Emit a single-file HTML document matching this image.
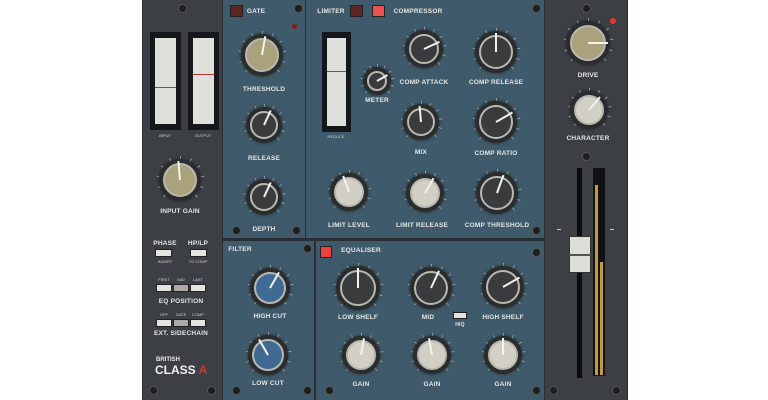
<!DOCTYPE html>
<html><head><meta charset="utf-8"><style>
body{margin:0;width:768px;height:400px;background:#fff;position:relative;overflow:hidden;font-family:"Liberation Sans",sans-serif}
div{position:absolute;box-sizing:border-box}
.l{color:#e4e6e4;font-size:6.5px;font-weight:bold;white-space:nowrap;transform:translateX(-50%);letter-spacing:.2px}
.s{color:#cfd3d3;font-size:4px;white-space:nowrap;transform:translateX(-50%)}
.k{border-radius:50%}
.scr{width:9px;height:9px;border-radius:50%;background:#1c1e20;border:1px solid #555}
.btn{background:#e4e4e0;border:1px solid #222;height:8px}
.t{width:1px;background:#9aaab0;transform-origin:50% 0}
</style></head><body>
<div style="left:142px;top:0;width:486px;height:400px;background:#2a2d31"></div>
<div style="left:143px;top:0;width:79px;height:400px;background:#3c4045"></div>
<div style="left:545px;top:0;width:82px;height:400px;background:#3c4045"></div>
<div style="left:223px;top:0;width:82px;height:238px;background:#3f5b6b"></div>
<div style="left:306px;top:0;width:238px;height:238px;background:#3f5b6b"></div>
<div style="left:223px;top:241px;width:91px;height:159px;background:#3f5b6b"></div>
<div style="left:316px;top:241px;width:228px;height:159px;background:#3f5b6b"></div>
<div style="left:150px;top:32px;width:31px;height:98px;background:#15171a"></div>
<div style="left:155px;top:38px;width:21px;height:86px;background:#dfe0dc"></div>
<div style="left:155px;top:87px;width:21px;height:1px;background:#b33"></div>
<div style="left:188px;top:32px;width:31px;height:98px;background:#15171a"></div>
<div style="left:193px;top:38px;width:21px;height:86px;background:#dfe0dc"></div>
<div style="left:193px;top:74px;width:21px;height:1px;background:#b33"></div>
<div style="left:322px;top:32px;width:29px;height:100px;background:#15171a"></div>
<div style="left:327px;top:38px;width:19px;height:88px;background:#dfe0dc"></div>
<div style="left:327px;top:71px;width:19px;height:1px;background:#b33"></div>
<div style="left:230px;top:5px;width:13px;height:12px;background:#5a2626;border:1px solid #222"></div>
<div style="left:350px;top:5px;width:13px;height:12px;background:#5a2626;border:1px solid #222"></div>
<div style="left:372px;top:5px;width:13px;height:12px;background:#ef5050;border:1px solid #222"></div>
<div style="left:320px;top:246px;width:12px;height:12px;background:#ef4040;border:1px solid #222"></div>
<div style="left:292px;top:24px;width:5px;height:5px;border-radius:50%;background:#8a1b1b"></div>
<div style="left:610px;top:18px;width:6px;height:6px;border-radius:50%;background:#e33"></div>
<div style="left:577px;top:168px;width:5px;height:210px;background:#0d0d0e"></div>
<div style="left:593px;top:168px;width:12px;height:208px;background:#111"></div>
<div style="left:595px;top:185px;width:3px;height:190px;background:#c49a3a"></div>
<div style="left:600px;top:262px;width:3px;height:113px;background:#c49a3a"></div>
<div style="left:569px;top:236px;width:22px;height:37px;background:#ddddd8;border:1px solid #333"></div>
<div style="left:569px;top:254px;width:22px;height:2px;background:#555"></div>
<div style="left:557px;top:229px;width:4px;height:1px;background:#ccc"></div><div style="left:610px;top:229px;width:4px;height:1px;background:#ccc"></div>
<div class="btn" style="left:155px;top:249px;width:17px"></div>
<div class="btn" style="left:190px;top:249px;width:17px"></div>
<div class="btn" style="left:156px;top:284px;width:16px"></div>
<div class="btn" style="left:173px;top:284px;width:16px;background:#aaa"></div>
<div class="btn" style="left:190px;top:284px;width:16px"></div>
<div class="btn" style="left:156px;top:319px;width:16px"></div>
<div class="btn" style="left:173px;top:319px;width:16px;background:#aaa"></div>
<div class="btn" style="left:190px;top:319px;width:16px"></div>
<div class="btn" style="left:453px;top:312px;width:14px;height:7px"></div>
<div class="scr" style="left:178px;top:4px"></div><div class="scr" style="left:149px;top:386px"></div><div class="scr" style="left:207px;top:386px"></div>
<div class="scr" style="left:294px;top:4px"></div><div class="scr" style="left:532px;top:4px"></div><div class="scr" style="left:232px;top:226px"></div><div class="scr" style="left:292px;top:226px"></div>
<div class="scr" style="left:532px;top:226px"></div><div class="scr" style="left:303px;top:244px"></div><div class="scr" style="left:232px;top:386px"></div><div class="scr" style="left:303px;top:386px"></div>
<div class="scr" style="left:325px;top:386px"></div><div class="scr" style="left:532px;top:386px"></div><div class="scr" style="left:532px;top:248px"></div>
<div class="scr" style="left:582px;top:152px"></div><div class="scr" style="left:549px;top:386px"></div><div class="scr" style="left:612px;top:386px"></div><div class="scr" style="left:582px;top:4px"></div>
<div id="knobs"></div>
<div class="l" style="left:256px;top:8px">GATE</div>
<div class="l" style="left:331px;top:8px">LIMITER</div>
<div class="l" style="left:418px;top:8px">COMPRESSOR</div>
<div class="l" style="left:240px;top:246px">FILTER</div>
<div class="l" style="left:361px;top:247px">EQUALISER</div>
<div class="l" style="left:264px;top:86px">THRESHOLD</div>
<div class="l" style="left:264px;top:155px">RELEASE</div>
<div class="l" style="left:264px;top:226px">DEPTH</div>
<div class="l" style="left:180px;top:208px">INPUT GAIN</div>
<div class="l" style="left:377px;top:97px">METER</div>
<div class="l" style="left:424px;top:79px">COMP ATTACK</div>
<div class="l" style="left:496px;top:79px">COMP RELEASE</div>
<div class="l" style="left:421px;top:149px">MIX</div>
<div class="l" style="left:496px;top:150px">COMP RATIO</div>
<div class="l" style="left:349px;top:222px">LIMIT LEVEL</div>
<div class="l" style="left:422px;top:222px">LIMIT RELEASE</div>
<div class="l" style="left:497px;top:222px">COMP THRESHOLD</div>
<div class="l" style="left:270px;top:313px">HIGH CUT</div>
<div class="l" style="left:268px;top:380px">LOW CUT</div>
<div class="l" style="left:358px;top:314px">LOW SHELF</div>
<div class="l" style="left:428px;top:314px">MID</div>
<div class="l" style="left:503px;top:314px">HIGH SHELF</div>
<div class="l" style="left:460px;top:322px;font-size:5px">HIQ</div>
<div class="l" style="left:361px;top:381px">GAIN</div>
<div class="l" style="left:432px;top:381px">GAIN</div>
<div class="l" style="left:503px;top:381px">GAIN</div>
<div class="l" style="left:588px;top:72px">DRIVE</div>
<div class="l" style="left:588px;top:135px">CHARACTER</div>
<div class="l" style="left:165px;top:240px">PHASE</div>
<div class="l" style="left:198px;top:240px">HP/LP</div>
<div class="l" style="left:181px;top:298px">EQ POSITION</div>
<div class="l" style="left:181px;top:330px">EXT. SIDECHAIN</div>
<div class="s" style="left:165px;top:259px">INVERT</div><div class="s" style="left:198px;top:259px">TO COMP</div>
<div class="s" style="left:164px;top:277px">FIRST</div><div class="s" style="left:181px;top:277px">MID</div><div class="s" style="left:198px;top:277px">LAST</div>
<div class="s" style="left:164px;top:312px">OFF</div><div class="s" style="left:181px;top:312px">GATE</div><div class="s" style="left:198px;top:312px">COMP</div>
<div class="s" style="left:165px;top:133px">INPUT</div><div class="s" style="left:203px;top:133px">OUTPUT</div><div class="s" style="left:336px;top:134px">REDUCE</div>
<div style="left:156px;top:357px;color:#e8e8e8;font-size:6px;font-weight:bold">BRITISH</div>
<div style="left:155px;top:363px;color:#f0f0f0;font-size:12px;font-weight:bold">CLASS <span style="color:#d33">A</span></div>
<script>
var K=[[262,55,17,'#a9a27a',10],[264,125,14,'#3a3b3c',25],[264,197,14,'#3a3b3c',25],[180,180,17,'#a9a27a',-5],[377,81,10,'#3a3b3c',60],[424,49,15,'#3a3b3c',65],[496,52,17,'#3a3b3c',0],[421,122,14,'#3a3b3c',-5],[496,122,17,'#3a3b3c',60],[349,192,15,'#d2d0c4',-20],[425,193,15,'#d2d0c4',30],[497,193,17,'#3a3b3c',20],[270,288,16,'#3e6a93',30],[268,355,16,'#3e6a93',-30],[358,288,18,'#3a3b3c',0],[431,288,17,'#3a3b3c',25],[503,287,17,'#3a3b3c',60],[361,355,15,'#d2d0c4',10],[432,355,15,'#d2d0c4',-10],[503,355,15,'#d2d0c4',0],[588,43,18,'#a9a27a',90],[589,110,15,'#d2d0c4',40]],h='';
K.forEach(function(k){var x=k[0],y=k[1],r=k[2],R=r+4,a=k[4];
for(var i=0;i<11;i++){var t=-135+i*27;h+='<div class="t" style="left:'+x+'px;top:'+y+'px;height:'+(R+3)+'px;transform:rotate('+(180+t)+'deg)"></div>';}
h+='<div class="k" style="left:'+(x-R)+'px;top:'+(y-R)+'px;width:'+2*R+'px;height:'+2*R+'px;background:#2b2c2d;box-shadow:0 0 3px #222"></div>';
h+='<div class="k" style="left:'+(x-r)+'px;top:'+(y-r)+'px;width:'+2*r+'px;height:'+2*r+'px;background:'+k[3]+';border:2px solid #b8b8b2"></div>';
h+='<div style="left:'+(x-1)+'px;top:'+(y-r-2)+'px;width:2px;height:'+(r+2)+'px;background:#f2f2ee;transform-origin:50% 100%;transform:rotate('+a+'deg)"></div>';});
document.getElementById('knobs').innerHTML=h;
</script>
</body></html>
